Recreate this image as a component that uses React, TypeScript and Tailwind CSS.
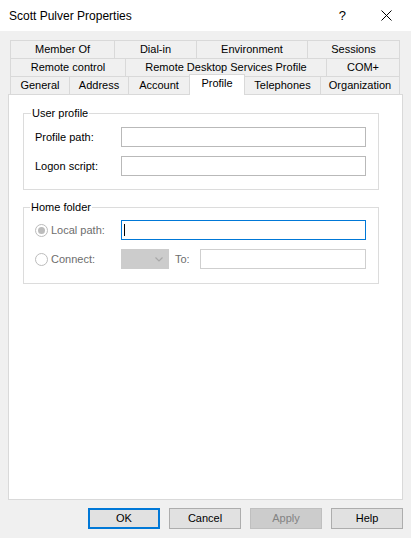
import React from "react";

function Tab({ w, label, last }: { w: string; label: string; last?: boolean }) {
  return (
    <div
      className={`${w} h-[18px] flex items-center justify-center border-t border-l border-[#d9d9d9] bg-[#f0f0f0] ${
        last ? "border-r" : ""
      }`}
    >
      <span className="leading-none">{label}</span>
    </div>
  );
}

function Radio({ checked }: { checked?: boolean }) {
  return (
    <div className="w-[13px] h-[13px] rounded-full border border-[#bcbcbc] bg-white flex items-center justify-center shrink-0">
      {checked && <div className="w-[7px] h-[7px] rounded-full bg-[#bcbcbc]" />}
    </div>
  );
}

function Button({ label, kind }: { label: string; kind?: "default" | "disabled" }) {
  if (kind === "default") {
    return (
      <div className="w-[72px] h-[21px] border-2 border-[#0078d7] bg-[#e1e1e1] flex items-center justify-center">
        {label}
      </div>
    );
  }
  if (kind === "disabled") {
    return (
      <div className="w-[72px] h-[21px] border border-[#bfbfbf] bg-[#cccccc] text-[#838383] flex items-center justify-center">
        {label}
      </div>
    );
  }
  return (
    <div className="w-[72px] h-[21px] border border-[#adadad] bg-[#e1e1e1] flex items-center justify-center">
      {label}
    </div>
  );
}

export default function App() {
  return (
    <div className="w-[411px] h-[538px] bg-[#f0f0f0] flex flex-col font-['Liberation_Sans',Arial,sans-serif] text-[11px] text-black overflow-hidden">
      {/* Title bar */}
      <div className="h-[31px] bg-white flex items-center shrink-0">
        <span className="ml-[9px] text-[12px] leading-none">Scott Pulver Properties</span>
        <span className="ml-auto text-[13px] leading-none mr-[35px]">?</span>
        <svg width="11" height="11" viewBox="0 0 11 11" className="mr-[19px]">
          <path d="M0.5 0.5 L10.5 10.5 M10.5 0.5 L0.5 10.5" stroke="#000" strokeWidth="1" fill="none" />
        </svg>
      </div>

      {/* Tabs */}
      <div className="pt-[9px] pl-[10px] flex flex-col">
        <div className="flex w-[390px]">
          <Tab w="w-[104px]" label="Member Of" />
          <Tab w="w-[82px]" label="Dial-in" />
          <Tab w="w-[111px]" label="Environment" />
          <Tab w="w-[93px]" label="Sessions" last />
        </div>
        <div className="flex w-[390px]">
          <Tab w="w-[115px]" label="Remote control" />
          <Tab w="w-[201px]" label="Remote Desktop Services Profile" />
          <Tab w="w-[74px]" label="COM+" last />
        </div>
        <div className="flex items-end w-[390px] h-[18px]">
          <Tab w="w-[59px]" label="General" />
          <Tab w="w-[59px]" label="Address" />
          <Tab w="w-[61px]" label="Account" />
          <div className="relative z-10 w-[56px] h-[21px] -mb-px bg-white border-t border-l border-r border-[#d9d9d9] flex justify-center pt-[3px]">
            <span className="leading-none">Profile</span>
          </div>
          <div className="w-[75px] h-[18px] flex items-center justify-center border-t border-[#d9d9d9] bg-[#f0f0f0]">
            <span className="leading-none">Telephones</span>
          </div>
          <Tab w="w-[80px]" label="Organization" last />
        </div>
      </div>

      {/* Panel */}
      <div className="ml-[8px] w-[395px] h-[406px] bg-white border border-[#d9d9d9] flex flex-col shrink-0">
        <fieldset className="mt-[10px] ml-[14px] w-[356px] border border-[#dcdcdc] pl-[11px] pb-[13px]">
          <legend className="-ml-[4px] px-[1px] leading-[16px]">User profile</legend>
          <div className="mt-[6px] flex flex-col gap-[9px]">
            <div className="flex items-center h-[20px]">
              <span className="w-[86px] shrink-0">Profile path:</span>
              <div className="w-[245px] h-[20px] border border-[#b9b9b9] bg-white" />
            </div>
            <div className="flex items-center h-[20px]">
              <span className="w-[86px] shrink-0">Logon script:</span>
              <div className="w-[245px] h-[20px] border border-[#b9b9b9] bg-white" />
            </div>
          </div>
        </fieldset>

        <fieldset className="mt-[9px] ml-[14px] w-[356px] border border-[#dcdcdc] pl-[11px] pb-[14px]">
          <legend className="-ml-[5px] px-[1px] leading-[16px]">Home folder</legend>
          <div className="mt-[5px] flex flex-col gap-[9px]">
            <div className="flex items-center h-[20px]">
              <div className="w-[86px] shrink-0 flex items-center gap-[3px] text-[#6d6d6d]">
                <Radio checked />
                <span>Local path:</span>
              </div>
              <div className="w-[245px] h-[20px] border border-[#0078d7] bg-white flex items-center pl-[2px]">
                <div className="w-px h-[12px] bg-black" />
              </div>
            </div>
            <div className="flex items-center h-[20px]">
              <div className="w-[86px] shrink-0 flex items-center gap-[3px] text-[#6d6d6d]">
                <Radio />
                <span>Connect:</span>
              </div>
              <div className="w-[48px] h-[20px] bg-[#cccccc] border border-[#cccccc] flex items-center justify-end pr-[5px]">
                <svg width="8" height="5" viewBox="0 0 8 5">
                  <path d="M0.5 0.5 L4 4 L7.5 0.5" stroke="#a8a8a8" strokeWidth="1.2" fill="none" />
                </svg>
              </div>
              <span className="ml-[6px] w-[25px] text-[#6d6d6d]">To:</span>
              <div className="w-[166px] h-[20px] border border-[#cfcfcf] bg-white" />
            </div>
          </div>
        </fieldset>
      </div>

      {/* Buttons */}
      <div className="mt-[8px] flex justify-end gap-[9px] pr-[8px]">
        <Button label="OK" kind="default" />
        <Button label="Cancel" />
        <Button label="Apply" kind="disabled" />
        <Button label="Help" />
      </div>
    </div>
  );
}
